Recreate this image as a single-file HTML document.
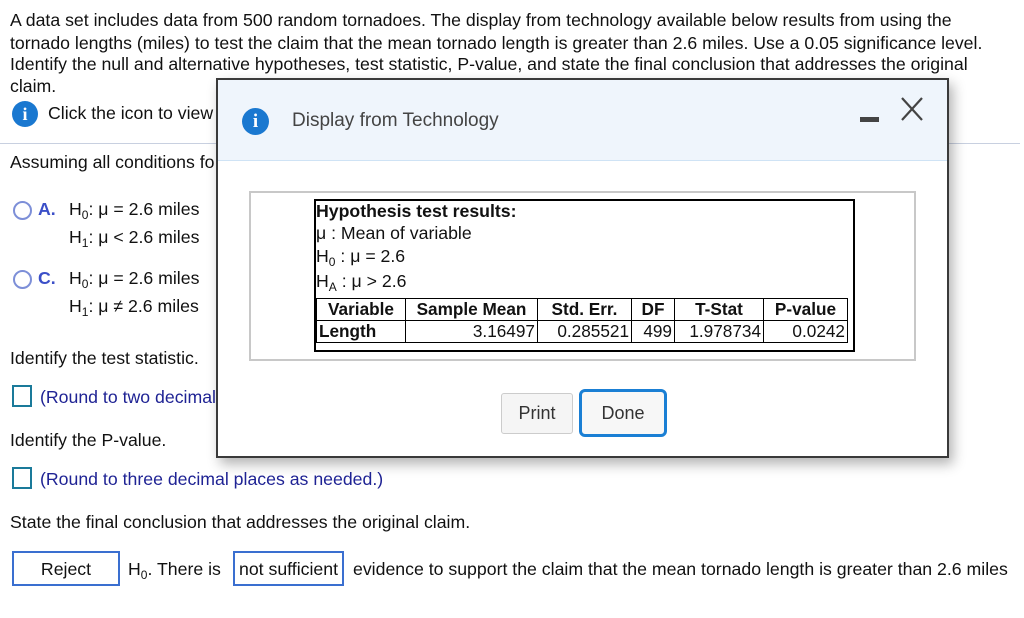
<!DOCTYPE html>
<html><head><meta charset="utf-8"><style>
body{margin:0;width:1024px;height:618px;background:#fff;font-family:"Liberation Sans",sans-serif;font-size:17.7px;color:#111;position:relative;overflow:hidden}
.a{position:absolute;white-space:nowrap;line-height:20px}
sub{font-size:12px;vertical-align:-4px;line-height:0}
.info{position:absolute;border-radius:50%;background:#1a78d0;color:#fff;font-weight:bold;text-align:center;font-family:"Liberation Serif",serif}
.radio{position:absolute;width:15px;height:15px;border:2px solid #7d8fd8;border-radius:50%}
.lbl{color:#3b4fc8;font-weight:bold}
.box{position:absolute;border:2px solid #1a7a9a;width:20px;height:22px;box-sizing:border-box}
.navy{color:#1f2394}
table{border-collapse:collapse;position:absolute;left:316px;top:298px;font-size:17.2px;table-layout:fixed;width:531px}
td{border:1px solid #000;padding:0 2px;height:21px;line-height:21px;white-space:nowrap;overflow:hidden}
</style></head><body>
<div class="a" style="left:10px;top:10px">A data set includes data from 500 random tornadoes. The display from technology available below results from using the</div>
<div class="a" style="left:10px;top:33px">tornado lengths (miles) to test the claim that the mean tornado length is greater than 2.6 miles. Use a 0.05 significance level.</div>
<div class="a" style="left:10px;top:54px">Identify the null and alternative hypotheses, test statistic, P-value, and state the final conclusion that addresses the original</div>
<div class="a" style="left:10px;top:76px">claim.</div>
<div class="info" style="left:12px;top:101px;width:26px;height:26px;line-height:26px;font-size:18px">i</div>
<div class="a" style="left:48px;top:103px">Click the icon to view</div>
<div style="position:absolute;left:0;top:143px;width:1020px;height:1px;background:#c8d0e0"></div>
<div class="a" style="left:10px;top:152px">Assuming all conditions fo</div>
<div class="radio" style="left:13px;top:201px"></div>
<div class="a lbl" style="left:38px;top:199px">A.</div>
<div class="a" style="left:69px;top:199px">H<sub>0</sub>: μ = 2.6 miles</div>
<div class="a" style="left:69px;top:227px">H<sub>1</sub>: μ &lt; 2.6 miles</div>
<div class="radio" style="left:13px;top:270px"></div>
<div class="a lbl" style="left:38px;top:268px">C.</div>
<div class="a" style="left:69px;top:268px">H<sub>0</sub>: μ = 2.6 miles</div>
<div class="a" style="left:69px;top:296px">H<sub>1</sub>: μ ≠ 2.6 miles</div>
<div class="a" style="left:10px;top:348px">Identify the test statistic.</div>
<div class="box" style="left:12px;top:385px"></div>
<div class="a navy" style="left:40px;top:387px">(Round to two decimal</div>
<div class="a" style="left:10px;top:430px">Identify the P-value.</div>
<div class="box" style="left:12px;top:467px"></div>
<div class="a navy" style="left:40px;top:469px">(Round to three decimal places as needed.)</div>
<div class="a" style="left:10px;top:512px">State the final conclusion that addresses the original claim.</div>
<div style="position:absolute;left:12px;top:551px;width:108px;height:35px;box-sizing:border-box;border:2px solid #3a6fd0;text-align:center;line-height:33px">Reject</div>
<div class="a" style="left:128px;top:559px">H<sub>0</sub>. There is</div>
<div style="position:absolute;left:233px;top:551px;width:111px;height:35px;box-sizing:border-box;border:2px solid #3a6fd0;text-align:center;line-height:33px;white-space:nowrap">not sufficient</div>
<div class="a" style="left:353px;top:559px">evidence to support the claim that the mean tornado length is greater than 2.6 miles</div>

<div style="position:absolute;left:216px;top:78px;width:733px;height:380px;box-sizing:border-box;border:2px solid #3a3a3a;background:#fff;box-shadow:4px 6px 12px rgba(0,0,0,0.3)">
 <div style="position:absolute;left:0;top:0;right:0;height:80px;background:#eff5fc;border-bottom:1px solid #cfe3f5"></div>
</div>
<div class="info" style="left:242px;top:108px;width:27px;height:27px;line-height:27px;font-size:19px">i</div>
<div class="a" style="left:292px;top:111px;font-size:19px;color:#444">Display from Technology</div>
<div style="position:absolute;left:860px;top:117px;width:19px;height:5px;background:#444"></div>
<svg style="position:absolute;left:899px;top:96px" width="26" height="26"><path d="M3 2L23 24M23 2L3 24" stroke="#444" stroke-width="2.2"/></svg>
<div style="position:absolute;left:249px;top:191px;width:667px;height:170px;box-sizing:border-box;border:2px solid #c8c8c8"></div>
<div style="position:absolute;left:314px;top:199px;width:541px;height:153px;box-sizing:border-box;border:2px solid #000"></div>
<div class="a" style="left:316px;top:201px;font-weight:bold">Hypothesis test results:</div>
<div class="a" style="left:316px;top:223px">μ : Mean of variable</div>
<div class="a" style="left:316px;top:246px">H<sub>0</sub> : μ = 2.6</div>
<div class="a" style="left:316px;top:271px">H<sub>A</sub> : μ &gt; 2.6</div>
<table>
<colgroup><col style="width:89px"><col style="width:132px"><col style="width:94px"><col style="width:43px"><col style="width:89px"><col style="width:84px"></colgroup>
<tr style="font-weight:bold;text-align:center"><td>Variable</td><td>Sample Mean</td><td>Std. Err.</td><td>DF</td><td>T-Stat</td><td>P-value</td></tr>
<tr style="text-align:right"><td style="text-align:left;font-weight:bold">Length</td><td>3.16497</td><td>0.285521</td><td>499</td><td>1.978734</td><td>0.0242</td></tr>
</table>
<div style="position:absolute;left:501px;top:393px;width:72px;height:41px;box-sizing:border-box;border:1px solid #ccc;border-radius:3px;background:#f5f5f5;text-align:center;line-height:39px;color:#333;font-size:18px">Print</div>
<div style="position:absolute;left:579px;top:389px;width:88px;height:48px;box-sizing:border-box;border:3px solid #1a7fd4;border-radius:6px;background:#f7f7f7;text-align:center;line-height:42px;color:#333;font-size:18px">Done</div>
</body></html>
